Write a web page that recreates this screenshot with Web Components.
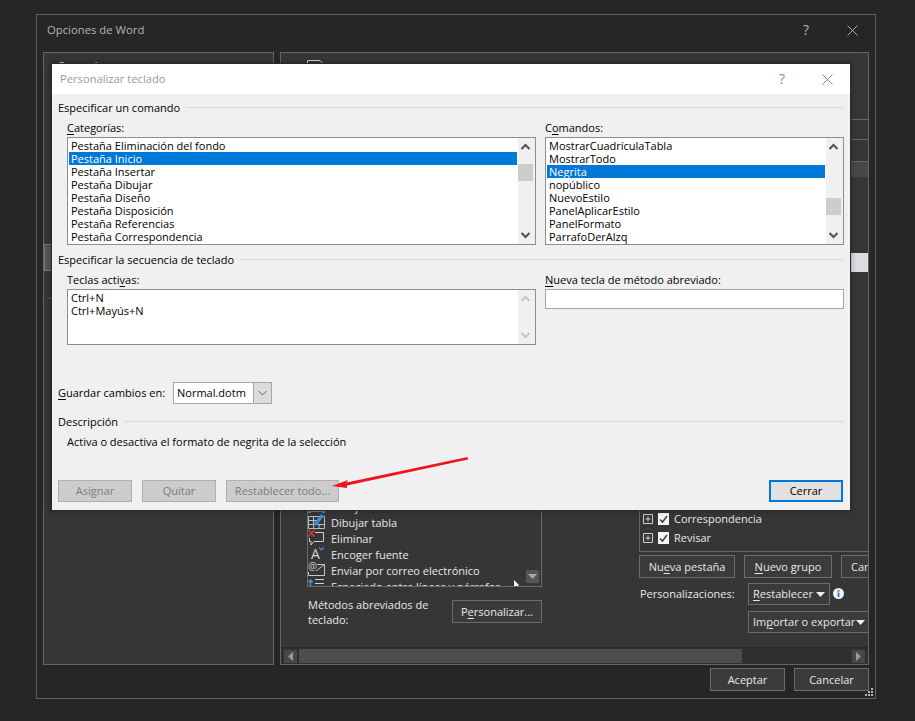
<!DOCTYPE html>
<html lang="es">
<head>
<meta charset="utf-8">
<title>Personalizar teclado</title>
<style>
    html, body { margin: 0; height: 100%; }
    body {
        background: #262626;
        font: 11px/16px "Open Sans", "Noto Sans", sans-serif;
        text-underline-offset: 2px;
        overflow: hidden;
    }
</style>
</head>
<body>

<word-options>
    <options-nav slot="nav"></options-nav>
    <ribbon-panel slot="main">
        <cmd-row icon="textbox">Dibujar cuadro de texto vertical</cmd-row>
        <cmd-row icon="table">Dibujar tabla</cmd-row>
        <cmd-row icon="delete">Eliminar</cmd-row>
        <cmd-row icon="shrink">Encoger fuente</cmd-row>
        <cmd-row icon="mail">Enviar por correo electrónico</cmd-row>
        <cmd-row icon="spacing">Espaciado entre líneas y párrafos</cmd-row>
    </ribbon-panel>
    <dark-btn slot="footer" style="width:75px">Aceptar</dark-btn>
    <dark-btn slot="footer" style="width:75px">Cancelar</dark-btn>
</word-options>

<key-dialog></key-dialog>
<red-arrow></red-arrow>

<script>
const chevron = (dir, color, w = 2) => {
    const d = dir === 'up' ? 'M1.5 6 L5.5 2 L9.5 6' : 'M1.5 2 L5.5 6 L9.5 2';
    return `<svg width="11" height="8" viewBox="0 0 11 8"><path d="${d}" fill="none" stroke="${color}" stroke-width="${w}"/></svg>`;
};

const crossIcon = (color) =>
    `<svg width="11" height="11" viewBox="0 0 11 11"><path d="M.5 .5 L10.5 10.5 M10.5 .5 L.5 10.5" stroke="${color}" stroke-width="1"/></svg>`;

class WordOptions extends HTMLElement {
    constructor() {
        super();
        this.root = this.attachShadow({ mode: 'open' });
    }

    connectedCallback() {
        this.root.innerHTML = `
            <style>
                :host {
                    display: flex;
                    flex-direction: column;
                    box-sizing: border-box;
                    width: 840px;
                    height: 685px;
                    margin: 14px 0 0 36px;
                    padding: 0 6px;
                    border: 1px solid #5f5f5f;
                    position: relative;
                    color: #e8e8e8;
                }
                .title {
                    display: flex;
                    align-items: center;
                    height: 30px;
                    margin-bottom: 7px;
                    padding-left: 4px;
                    color: #b4b4b4;
                    font-size: 11.3px;
                }
                .title span:first-child { flex: 1; }
                .help { font-size: 14px; width: 44px; }
                .close { width: 11px; height: 11px; line-height: 0; margin-right: 11px; }
                .body { display: flex; gap: 6px; height: 613px; }
                .footer { display: flex; justify-content: flex-end; gap: 9px; margin-top: 3px; }
                .grip { position: absolute; right: 1px; bottom: 1px; line-height: 0; }
            </style>
            <div class="title">
                <span>Opciones de Word</span>
                <span class="help">?</span>
                <span class="close">${crossIcon('#b0b0b0')}</span>
            </div>
            <div class="body">
                <slot name="nav"></slot>
                <slot name="main"></slot>
            </div>
            <div class="footer"><slot name="footer"></slot></div>
            <div class="grip">
                <svg width="9" height="9" viewBox="0 0 9 9" fill="#b4b4b4">
                    <rect x="6" y="0" width="2" height="2"/>
                    <rect x="3" y="3" width="2" height="2"/><rect x="6" y="3" width="2" height="2"/>
                    <rect x="0" y="6" width="2" height="2"/><rect x="3" y="6" width="2" height="2"/><rect x="6" y="6" width="2" height="2"/>
                </svg>
            </div>
        `;
    }
}

class OptionsNav extends HTMLElement {
    constructor() {
        super();
        this.root = this.attachShadow({ mode: 'open' });
    }

    connectedCallback() {
        this.root.innerHTML = `
            <style>
                :host {
                    display: block;
                    box-sizing: border-box;
                    width: 231px;
                    background: #363636;
                    border: 1px solid #666;
                    padding-top: 5px;
                }
                .first { padding-left: 13px; }
                .active {
                    box-sizing: border-box;
                    height: 27px;
                    margin-top: 170px;
                    background: #555;
                    border: 1px solid #7b7b7b;
                }
                .sep { height: 1px; background: #5a5a5a; margin: 27px 0 0 3px; }
            </style>
            <div class="first">General</div>
            <div class="active"></div>
            <div class="sep"></div>
        `;
    }
}

class RibbonPanel extends HTMLElement {
    constructor() {
        super();
        this.root = this.attachShadow({ mode: 'open' });
    }

    connectedCallback() {
        this.root.innerHTML = `
            <style>
                :host {
                    display: flex;
                    flex-direction: column;
                    box-sizing: border-box;
                    width: 589px;
                    background: #363636;
                    border: 1px solid #666;
                }
                .area {
                    flex: 1;
                    min-height: 0;
                    overflow: hidden;
                    display: grid;
                    grid-template-columns: 235px 260px;
                    column-gap: 97px;
                    padding-left: 26px;
                }
                .doc { display: block; margin-top: 7px; }
                .list {
                    position: relative;
                    box-sizing: border-box;
                    height: 89px;
                    margin-top: 424px;
                    border: 1px solid #6a6a6a;
                    overflow: hidden;
                }
                .more {
                    position: absolute;
                    right: 2px;
                    top: 71px;
                    width: 13px;
                    height: 13px;
                    background: #555;
                    display: flex;
                    align-items: center;
                    justify-content: center;
                }
                .sub { position: absolute; right: 22px; top: 81px; width: 0; height: 0;
                    border-left: 5px solid #eee; border-top: 5px solid transparent; border-bottom: 5px solid transparent; }
                .shortcut { display: flex; justify-content: space-between; align-items: flex-start; margin-top: 10px; }
                .shortcut p { margin: 0; padding-left: 1px; line-height: 15px; }
                .shortcut dark-btn { margin-top: 3px; width: 90px; }
                .combo { box-sizing: border-box; height: 21px; margin-top: 66px; border: 1px solid #666; border-right: 0; }
                .tree {
                    box-sizing: border-box;
                    display: flex;
                    flex-direction: column;
                    height: 391px;
                    margin-top: 21px;
                    border: 1px solid #666;
                    padding-bottom: 4px;
                }
                .tree .top { height: 15px; background: #484848; flex: none; }
                .tree .sel { height: 19px; background: #dcdce0; flex: none; margin-top: 76px; }
                .tree .rows { margin-top: auto; }
                .row { display: flex; align-items: center; }
                .btns { gap: 9px; margin-top: 3px; }
                .label { width: 109px; padding-left: 1px; box-sizing: border-box; }
                .info { margin-left: 3px; line-height: 0; margin-top: -2px; }
                .hscroll {
                    box-sizing: border-box;
                    flex: none;
                    display: flex;
                    align-items: center;
                    height: 17px;
                    background: #2f2f2f;
                    border-top: 1px solid #282828;
                    padding: 0 3px;
                }
                .hscroll .b { width: 13px; height: 13px; background: #484848; display: flex; align-items: center; justify-content: center; }
                .hscroll .t { width: 443px; height: 14px; margin-left: 2px; background: #4d4d4d; margin-right: auto; }
            </style>
            <div class="area">
                <div>
                    <svg class="doc" width="18" height="14" viewBox="0 0 18 14">
                        <path d="M.5 14 V.5 H13 L17.5 5 V14" fill="none" stroke="#d0d0d0"/>
                    </svg>
                    <div class="list">
                        <slot></slot>
                        <span class="sub"></span>
                        <span class="more"><svg width="9" height="5" viewBox="0 0 9 5"><path d="M0 0 H9 L4.5 5 Z" fill="#a8a8a8"/></svg></span>
                    </div>
                    <div class="shortcut">
                        <p>Métodos abreviados de<br>teclado:</p>
                        <dark-btn>P<u>e</u>rsonalizar...</dark-btn>
                    </div>
                </div>
                <div>
                    <div class="combo"></div>
                    <div class="tree">
                        <div class="top"></div>
                        <div class="sel"></div>
                        <div class="rows">
                            <tree-row>Correspondencia</tree-row>
                            <tree-row>Revisar</tree-row>
                        </div>
                    </div>
                    <div class="row btns">
                        <dark-btn style="width:96px">Nu<u>e</u>va pestaña</dark-btn>
                        <dark-btn style="width:88px"><u>N</u>uevo grupo</dark-btn>
                        <dark-btn style="width:120px;justify-content:flex-start;padding-left:9px">Cambiar</dark-btn>
                    </div>
                    <div class="row" style="margin-top:5px">
                        <span class="label">Personalizaciones:</span>
                        <dark-btn caret style="width:82px;height:22px"><u>R</u>establecer</dark-btn>
                        <span class="info">
                            <svg width="11" height="11" viewBox="0 0 11 11">
                                <circle cx="5.5" cy="5.5" r="5.5" fill="#f2f2f2"/>
                                <rect x="4.7" y="2" width="1.7" height="1.7" fill="#1e6fc0"/>
                                <rect x="4.7" y="4.5" width="1.7" height="4.5" fill="#1e6fc0"/>
                            </svg>
                        </span>
                    </div>
                    <div class="row" style="margin-top:6px;padding-left:109px">
                        <dark-btn caret style="width:122px;height:22px">Im<u>p</u>ortar o exportar</dark-btn>
                    </div>
                </div>
            </div>
            <div class="hscroll">
                <span class="b"><svg width="5" height="9" viewBox="0 0 5 9"><path d="M5 0 V9 L0 4.5 Z" fill="#9a9a9a"/></svg></span>
                <span class="t"></span>
                <span class="b"><svg width="5" height="9" viewBox="0 0 5 9"><path d="M0 0 V9 L5 4.5 Z" fill="#9a9a9a"/></svg></span>
            </div>
        `;
    }
}

class CmdRow extends HTMLElement {
    constructor() {
        super();
        this.root = this.attachShadow({ mode: 'open' });
        this.icons = {
            textbox: `<path d="M1.5 1 V12 H15.5 V1" fill="none" stroke="#ccc"/>
                      <rect x="0" y="11" width="3" height="3" fill="#3a8fd8"/><rect x="14" y="11" width="3" height="3" fill="#3a8fd8"/>`,
            table: `<path d="M.5 1.5 H16.5 V13.5 H.5 Z M.5 5.5 H9 M.5 9.5 H16.5 M5.5 1.5 V13.5 M11 9.5 V13.5" fill="none" stroke="#bdbdbd"/>
                    <path d="M6 8 L13 -1 L16 1 L9 10 L5.5 11 Z" fill="#3a8fd8"/>`,
            delete: `<path d="M7 1.5 H15.5 V10.5 H6 L3 14 V10.5 H1.5 V7" fill="none" stroke="#d0d0d0"/>
                     <path d="M.5 -1 L6.5 5.5 M6.5 -1 L.5 5.5" stroke="#e0313a" stroke-width="1.4"/>`,
            shrink: `<text x="3" y="12" font-size="14" fill="#d0d0d0" font-family="Open Sans, sans-serif">A</text>
                     <path d="M11 .5 L13.5 2.8 L16 .5" fill="none" stroke="#3a8fd8" stroke-width="1.4"/>`,
            mail: `<path d="M9 1.5 H16.5 V12.5 H.5 V9 M16.5 1.5 L8 8" fill="none" stroke="#c8c8c8"/>
                   <text x="0" y="7" font-size="10" fill="#d0d0d0" font-family="Open Sans, sans-serif">@</text>`,
            spacing: `<path d="M2.5 7 V1 M.3 3.2 L2.5 1 L4.7 3.2" fill="none" stroke="#3a9be8" stroke-width="1.5"/>
                      <path d="M7 .5 H16 M7 4.5 H16" stroke="#d0d0d0"/>`
        };
    }

    get icon() {
        return this.getAttribute('icon');
    }

    connectedCallback() {
        this.root.innerHTML = `
            <style>
                :host { display: flex; align-items: center; height: 16px; }
                svg { flex: none; width: 18px; height: 16px; margin-right: 5px; overflow: visible; }
            </style>
            <svg viewBox="0 0 18 16">${this.icons[this.icon] || ''}</svg>
            <slot></slot>
        `;
    }
}

class TreeRow extends HTMLElement {
    constructor() {
        super();
        this.root = this.attachShadow({ mode: 'open' });
    }

    connectedCallback() {
        this.root.innerHTML = `
            <style>
                :host { display: flex; align-items: center; height: 19px; padding-left: 3px; }
                svg { flex: none; }
                .plus { margin-right: 5px; }
                .check { margin-right: 5px; }
            </style>
            <svg class="plus" width="10" height="10" viewBox="0 0 10 10">
                <path d="M.5 .5 H9.5 V9.5 H.5 Z M2.5 5 H7.5 M5 2.5 V7.5" fill="none" stroke="#cfcfcf"/>
            </svg>
            <svg class="check" width="11" height="12" viewBox="0 0 11 12">
                <rect width="11" height="12" fill="#f4f4f4"/>
                <path d="M2 6.5 L4.5 9 L9 3" fill="none" stroke="#404040" stroke-width="1.5"/>
            </svg>
            <slot></slot>
        `;
    }
}

class DarkBtn extends HTMLElement {
    constructor() {
        super();
        this.root = this.attachShadow({ mode: 'open' });
    }

    connectedCallback() {
        const caret = this.hasAttribute('caret')
            ? '<svg width="9" height="5" viewBox="0 0 9 5"><path d="M0 0 H9 L4.5 5 Z" fill="#f0f0f0"/></svg>'
            : '';
        this.root.innerHTML = `
            <style>
                :host {
                    display: flex;
                    align-items: center;
                    justify-content: ${caret ? 'space-between' : 'center'};
                    box-sizing: border-box;
                    height: 23px;
                    flex: none;
                    padding: 0 ${caret ? '4px' : '0'};
                    background: #3b3b3b;
                    border: 1px solid #6c6c6c;
                    color: #e8e8e8;
                    white-space: nowrap;
                }
            </style>
            <span><slot></slot></span>${caret}
        `;
    }
}

class GroupHead extends HTMLElement {
    constructor() {
        super();
        this.root = this.attachShadow({ mode: 'open' });
    }

    connectedCallback() {
        this.root.innerHTML = `
            <style>
                :host { display: flex; align-items: center; gap: 6px; height: 16px; color: #000; white-space: nowrap; }
                i { flex: 1; height: 1px; margin-top: -2px; background: #dadada; }
            </style>
            <slot></slot><i></i>
        `;
    }
}

class ListRow extends HTMLElement {
    constructor() {
        super();
        this.root = this.attachShadow({ mode: 'open' });
    }

    connectedCallback() {
        this.root.innerHTML = `
            <style>
                :host { display: block; height: 13px; line-height: 13px; padding-left: 2px; white-space: nowrap; color: #000; }
                :host([selected]) { background: #0078d7; color: #fff; }
            </style>
            <slot></slot>
        `;
    }
}

class ListBox extends HTMLElement {
    constructor() {
        super();
        this.root = this.attachShadow({ mode: 'open' });
    }

    connectedCallback() {
        const off = this.hasAttribute('disabled');
        const color = off ? '#c4c4c4' : '#505050';
        const thumb = this.hasAttribute('thumb')
            ? `<div class="thumb" style="margin-top:${this.getAttribute('thumb')}px"></div>` : '';
        this.root.innerHTML = `
            <style>
                :host {
                    display: flex;
                    box-sizing: border-box;
                    border: 1px solid #8a8d96;
                    background: #fff;
                    overflow: hidden;
                }
                .rows { flex: 1; min-width: 0; padding: 1px 1px 0 1px; overflow: hidden; }
                .bar { flex: none; width: 15px; padding-right: 2px; background: #f0f0f0; display: flex; flex-direction: column; }
                .arrow { height: 18px; flex: none; display: flex; align-items: center; justify-content: center; }
                .arrow:last-child { margin-top: auto; }
                .thumb { height: 17px; width: 15px; background: #cdcdcd; flex: none; }
            </style>
            <div class="rows"><slot></slot></div>
            <div class="bar">
                <div class="arrow">${chevron('up', color)}</div>
                ${thumb}
                <div class="arrow">${chevron('down', color)}</div>
            </div>
        `;
    }
}

class WinBtn extends HTMLElement {
    constructor() {
        super();
        this.root = this.attachShadow({ mode: 'open' });
    }

    connectedCallback() {
        this.root.innerHTML = `
            <style>
                :host {
                    display: flex;
                    align-items: center;
                    justify-content: center;
                    box-sizing: border-box;
                    height: 22px;
                    background: #e1e1e1;
                    border: 1px solid #adadad;
                    color: #000;
                }
                :host([disabled]) { background: #cccccc; border-color: #b0b0b0; color: #7c7c7c; }
                :host([default]) { border: 2px solid #0078d7; }
            </style>
            <slot></slot>
        `;
    }
}

class KeyDialog extends HTMLElement {
    constructor() {
        super();
        this.root = this.attachShadow({ mode: 'open' });
    }

    connectedCallback() {
        this.root.innerHTML = `
            <style>
                :host {
                    position: absolute;
                    left: 52px;
                    top: 64px;
                    width: 798px;
                    height: 446px;
                    display: flex;
                    flex-direction: column;
                    background: #f0f0f0;
                    color: #000;
                    box-shadow: 0 0 0 1px #2a2a2a, 0 0 6px rgba(0, 0, 0, .5);
                }
                .title {
                    display: flex;
                    align-items: center;
                    flex: none;
                    height: 30px;
                    padding-left: 8px;
                    background: #fff;
                    color: #999;
                    font-size: 11.2px;
                }
                .title span:first-child { flex: 1; }
                .help { font-size: 14px; width: 43px; color: #8c8c8c; }
                .close { width: 11px; height: 11px; line-height: 0; margin-right: 17px; }
                .body { padding: 6px 6px 0; }
                .two {
                    display: grid;
                    grid-template-columns: 469px 299px;
                    column-gap: 9px;
                    padding-left: 9px;
                }
                .two label { display: block; height: 16px; margin-bottom: 1px; color: #000; }
                .save { display: flex; align-items: center; height: 22px; margin-top: 37px; }
                .save span:first-child { width: 115px; }
                .select {
                    display: flex;
                    align-items: stretch;
                    box-sizing: border-box;
                    width: 99px;
                    height: 22px;
                    background: #fff;
                    border: 1px solid #a6a6a6;
                    line-height: 20px;
                    padding-left: 3px;
                }
                .select b { flex: 1; font-weight: normal; }
                .select i {
                    flex: none;
                    width: 17px;
                    background: #dcdcdc;
                    border-left: 1px solid #a6a6a6;
                    display: flex;
                    align-items: center;
                    justify-content: center;
                }
                .input { box-sizing: border-box; height: 20px; background: #fff; border: 1px solid #a6a6a6; }
                .desc { padding-left: 9px; margin-top: 4px; height: 16px; color: #000; }
                .actions { display: flex; gap: 10px; margin-top: 30px; }
                .actions .end { margin-left: auto; margin-right: 1px; }
            </style>
            <div class="title">
                <span>Personalizar teclado</span>
                <span class="help">?</span>
                <span class="close">${crossIcon('#8c8c8c')}</span>
            </div>
            <div class="body">
                <group-head>Especificar un comando</group-head>
                <div class="two" style="margin-top:4px">
                    <div>
                        <label><u>C</u>ategorías:</label>
                        <list-box thumb="8" style="height:108px">
                            <list-row>Pestaña Eliminación del fondo</list-row>
                            <list-row selected>Pestaña Inicio</list-row>
                            <list-row>Pestaña Insertar</list-row>
                            <list-row>Pestaña Dibujar</list-row>
                            <list-row>Pestaña Diseño</list-row>
                            <list-row>Pestaña Disposición</list-row>
                            <list-row>Pestaña Referencias</list-row>
                            <list-row>Pestaña Correspondencia</list-row>
                        </list-box>
                    </div>
                    <div>
                        <label>C<u>o</u>mandos:</label>
                        <list-box thumb="42" style="height:108px">
                            <list-row>MostrarCuadrículaTabla</list-row>
                            <list-row>MostrarTodo</list-row>
                            <list-row selected>Negrita</list-row>
                            <list-row>nopúblico</list-row>
                            <list-row>NuevoEstilo</list-row>
                            <list-row>PanelAplicarEstilo</list-row>
                            <list-row>PanelFormato</list-row>
                            <list-row>ParrafoDerAlzq</list-row>
                        </list-box>
                    </div>
                </div>
                <group-head style="margin-top:7px">Especificar la secuencia de teclado</group-head>
                <div class="two" style="margin-top:4px">
                    <div>
                        <label>Teclas acti<u>v</u>as:</label>
                        <list-box disabled style="height:56px">
                            <list-row>Ctrl+N</list-row>
                            <list-row>Ctrl+Mayús+N</list-row>
                        </list-box>
                    </div>
                    <div>
                        <label><u>N</u>ueva tecla de método abreviado:</label>
                        <div class="input"></div>
                    </div>
                </div>
                <div class="save">
                    <span><u>G</u>uardar cambios en:</span>
                    <div class="select"><b>Normal.dotm</b><i>${chevron('down', '#606060', 1)}</i></div>
                </div>
                <group-head style="margin-top:10px">Descripción</group-head>
                <div class="desc">Activa o desactiva el formato de negrita de la selección</div>
                <div class="actions">
                    <win-btn disabled style="width:74px">Asignar</win-btn>
                    <win-btn disabled style="width:74px">Quitar</win-btn>
                    <win-btn disabled style="width:113px">Restablecer todo...</win-btn>
                    <win-btn default class="end" style="width:74px">Cerrar</win-btn>
                </div>
            </div>
        `;
    }
}

class RedArrow extends HTMLElement {
    constructor() {
        super();
        this.root = this.attachShadow({ mode: 'open' });
    }

    connectedCallback() {
        this.root.innerHTML = `
            <style>
                :host { position: absolute; left: 330px; top: 455px; width: 140px; height: 36px; line-height: 0; }
            </style>
            <svg width="140" height="36" viewBox="330 455 140 36">
                <path d="M332 486 L348 480 L346.5 482.5 L467.5 457 L468 459.5 L347 485.5 L347 488 Z" fill="#f0141e"/>
            </svg>
        `;
    }
}

customElements.define('word-options', WordOptions);
customElements.define('options-nav', OptionsNav);
customElements.define('ribbon-panel', RibbonPanel);
customElements.define('cmd-row', CmdRow);
customElements.define('tree-row', TreeRow);
customElements.define('dark-btn', DarkBtn);
customElements.define('group-head', GroupHead);
customElements.define('list-row', ListRow);
customElements.define('list-box', ListBox);
customElements.define('win-btn', WinBtn);
customElements.define('key-dialog', KeyDialog);
customElements.define('red-arrow', RedArrow);
</script>
</body>
</html>
